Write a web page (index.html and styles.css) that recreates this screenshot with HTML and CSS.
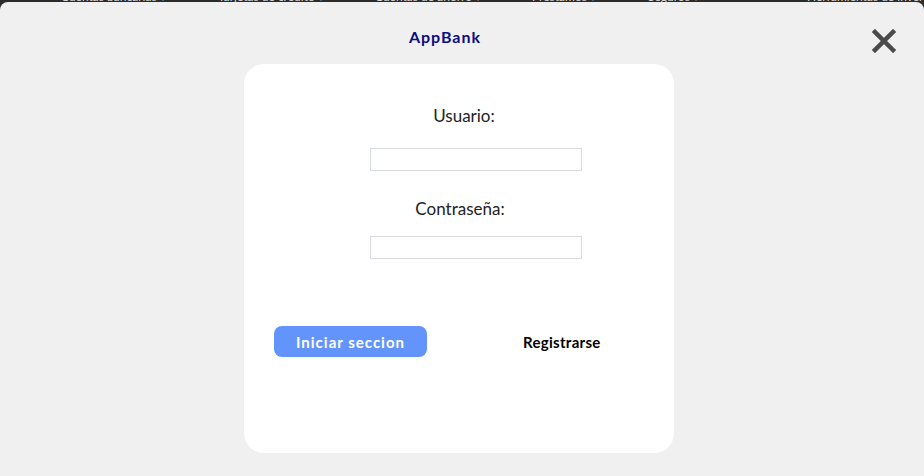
FILE: index.html
```
<!DOCTYPE html>
<html lang="es">
<head>
    <meta charset="UTF-8">
    <meta name="viewport" content="width=device-width, initial-scale=1.0">
    <title>AppBank - Iniciar seccion</title>
    <link rel="stylesheet" href="styles.css">
</head>
<body>

    <nav class="top-nav">
        <a class="nav-item i1">Cuentas bancarias &#9662;</a>
        <a class="nav-item i2">Tarjetas de credito &#9662;</a>
        <a class="nav-item i3">Cuentas de ahorro &#9662;</a>
        <a class="nav-item i4">Prestamos &#9662;</a>
        <a class="nav-item i5">Seguros &#9662;</a>
        <a class="nav-item i6">Herramientas de inversion</a>
    </nav>

    <div class="modal">
        <header class="modal-header">
            <h2 class="brand">AppBank</h2>
            <button class="close-btn" aria-label="Cerrar">
                <svg width="24" height="24" viewBox="0 0 24 24">
                    <path d="M3 3 L21 21 M21 3 L3 21" stroke="#4a4a4a" stroke-width="4.5" stroke-linecap="square"/>
                </svg>
            </button>
        </header>

        <section class="login-card">
            <form class="login-form">
                <label class="field-label lbl-user" for="usuario">Usuario:</label>
                <input class="field-input" type="text" id="usuario">

                <label class="field-label lbl-pass" for="clave">Contraseña:</label>
                <input class="field-input" type="password" id="clave">

                <div class="actions">
                    <button type="button" class="btn-login">Iniciar seccion</button>
                    <a class="btn-register">Registrarse</a>
                </div>
            </form>
        </section>
    </div>

</body>
</html>
```

FILE: styles.css
```
body {
    margin: 0;
    height: 476px;
    overflow: hidden;
    background-color: #2b2b2b;
    font-family: "Century Gothic", "Lato", "Open Sans", sans-serif;
    position: relative;
}

.top-nav {
    display: flex;
    height: 12px;
    margin-top: -9px;
    color: #d8d8d8;
    font-size: 12px;
    line-height: 12px;
    white-space: nowrap;
}

.nav-item {
    position: absolute;
    top: -9px;
}

.nav-item.i1 { left: 61px; }
.nav-item.i2 { left: 218px; }
.nav-item.i3 { left: 375px; }
.nav-item.i4 { left: 532px; }
.nav-item.i5 { left: 648px; }
.nav-item.i6 { left: 807px; }

.modal {
    position: absolute;
    top: 2px;
    left: 0;
    right: 0;
    bottom: -20px;
    background-color: #f0f0f0;
    border-radius: 8px 8px 0 0;
}

.modal-header {
    display: flex;
    align-items: center;
    height: 62px;
    padding-top: 6px;
    box-sizing: border-box;
}

.brand {
    flex: 1;
    margin: 0 -18px 0 0;
    text-align: center;
    font-size: 16px;
    font-weight: bold;
    letter-spacing: 1px;
    color: #0c0c84;
}

.close-btn {
    border: none;
    background: none;
    padding: 0;
    margin-right: 28px;
    width: 24px;
    height: 24px;
    cursor: pointer;
    margin-top: 10px;
}

.login-card {
    margin-left: 244px;
    width: 430px;
    height: 389px;
    background-color: #ffffff;
    border-radius: 20px;
}

.login-form {
    display: flex;
    flex-direction: column;
    padding-top: 42px;
}

.field-label {
    display: block;
    font-size: 17px;
    line-height: 20px;
    color: #222;
    text-align: center;
}

.lbl-user {
    padding-left: 10px;
}

.lbl-pass {
    margin-top: 28px;
    padding-left: 2px;
}

.field-input {
    margin: 22px 0 0 126px;
    width: 212px;
    height: 23px;
    box-sizing: border-box;
    border: 1px solid #d6dade;
    outline: none;
}

.lbl-pass + .field-input {
    margin-top: 17px;
}

.actions {
    display: flex;
    align-items: center;
    margin-top: 67px;
    padding-left: 30px;
}

.btn-login {
    width: 153px;
    height: 31px;
    border: none;
    border-radius: 8px;
    background-color: #6394fc;
    color: #ffffff;
    font-family: inherit;
    font-size: 15px;
    font-weight: bold;
    letter-spacing: 1px;
    cursor: pointer;
}

.btn-register {
    margin-left: 96px;
    font-size: 15px;
    font-weight: bold;
    letter-spacing: 0.3px;
    color: #000;
    cursor: pointer;
}
```
